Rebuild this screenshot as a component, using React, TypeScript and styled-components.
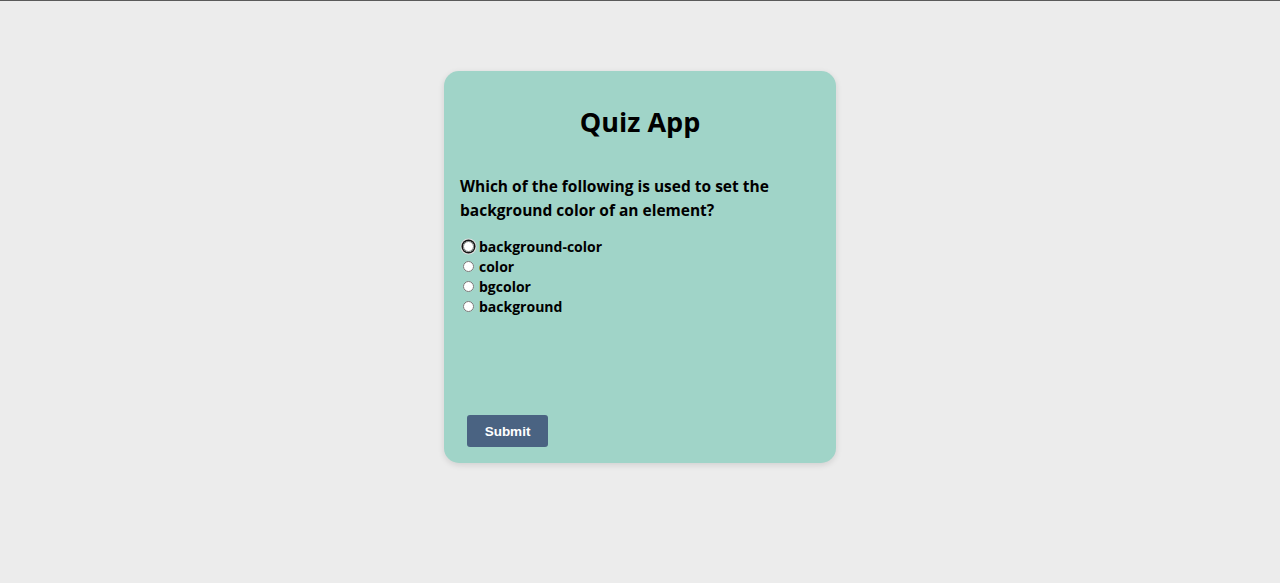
import React, { useState } from 'react';
import styled, { createGlobalStyle } from 'styled-components';

const GlobalStyle = createGlobalStyle`
  html {
    border-top: 1px solid #5a5a5a;
  }

  body {
    margin: 0;
    background: #ececec;
    font-family: 'Open Sans', 'Liberation Sans', sans-serif;
  }
`;

const Page = styled.div`
  display: flex;
  justify-content: center;
  padding-top: 70px;
  min-height: 512px;
`;

const Card = styled.div`
  display: flex;
  flex-direction: column;
  box-sizing: border-box;
  width: 392px;
  height: 392px;
  padding: 16px;
  background: #a0d4c8;
  border-radius: 15px;
  box-shadow: 0 2px 6px rgba(0, 0, 0, 0.12);
`;

const Title = styled.h1`
  margin: 16px 0 34px;
  text-align: center;
  font-size: 27px;
  font-weight: 700;
  color: #000;
`;

const Question = styled.h2`
  margin: 0 0 14px;
  font-size: 15.5px;
  line-height: 24px;
  font-weight: 700;
  color: #000;
`;

const Options = styled.ul`
  list-style: none;
  margin: 0;
  padding: 0;
  flex: 1;
`;

const Option = styled.li`
  display: flex;
  align-items: center;
  height: 20px;
`;

const RadioRing = styled.span<{ $focused?: boolean }>`
  display: inline-flex;
  margin: 0 5px 0 3px;
  border-radius: 50%;
  box-shadow: ${(p) => (p.$focused ? '0 0 0 1.5px #151515, 0 0 0 2.5px #e0e0e0' : 'none')};
`;

const Radio = styled.input`
  margin: 0;
  width: 11px;
  height: 11px;
  outline: none;
`;

const Label = styled.label`
  font-size: 14px;
  font-weight: 700;
  color: #000;
`;

const SubmitButton = styled.button`
  align-self: flex-start;
  margin-left: 7px;
  width: 81px;
  height: 32px;
  border: none;
  border-radius: 3px;
  background: #4a6382;
  color: #fff;
  font-family: 'Liberation Sans', Arial, sans-serif;
  font-size: 13.5px;
  font-weight: 700;
  cursor: pointer;
`;

const answers = ['background-color', 'color', 'bgcolor', 'background'];

export default function App() {
  const [selected, setSelected] = useState<string | null>(null);

  return (
    <Page>
      <GlobalStyle />
      <Card>
        <Title>Quiz App</Title>
        <Question>
          Which of the following is used to set the background color of an element?
        </Question>
        <Options>
          {answers.map((answer, i) => (
            <Option key={answer}>
              <RadioRing $focused={i === 0}>
                <Radio
                  type="radio"
                  id={answer}
                  name="answer"
                  checked={selected === answer}
                  onChange={() => setSelected(answer)}
                />
              </RadioRing>
              <Label htmlFor={answer}>{answer}</Label>
            </Option>
          ))}
        </Options>
        <SubmitButton>Submit</SubmitButton>
      </Card>
    </Page>
  );
}
